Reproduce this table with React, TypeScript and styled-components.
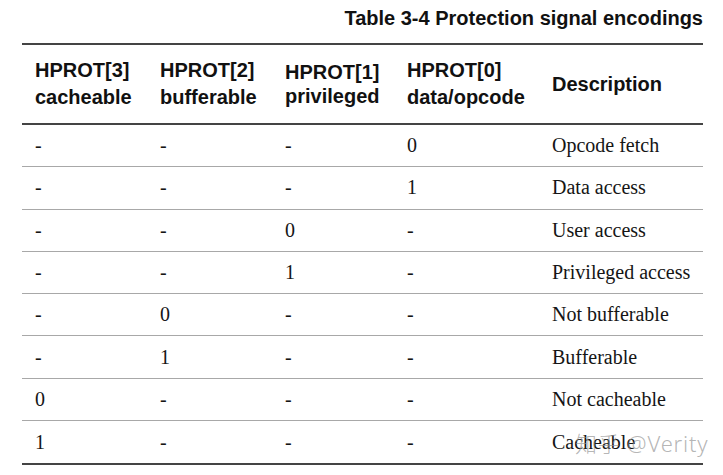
import styled, { createGlobalStyle } from 'styled-components';

const GlobalStyle = createGlobalStyle`
    html, body {
        margin: 0;
        padding: 0;
        background: #ffffff;
    }
`;

const Page = styled.div`
    width: 723px;
    height: 475px;
    padding: 6px 20px 0 22px;
    box-sizing: border-box;
    display: flex;
    flex-direction: column;
    position: relative;
    overflow: hidden;
`;

const Title = styled.div`
    font-family: 'Liberation Sans', Arial, sans-serif;
    font-weight: bold;
    font-size: 20px;
    line-height: 24px;
    color: #111;
    text-align: right;
    margin-bottom: 13px;
`;

const Table = styled.div`
    border-top: 2px solid #444;
    border-bottom: 2px solid #444;
    display: flex;
    flex-direction: column;
`;

const HeaderRow = styled.div`
    display: grid;
    grid-template-columns: 125px 125px 122px 145px 1fr;
    height: 78px;
    border-bottom: 2px solid #444;
`;

const HeadCell = styled.div<{ $tight?: boolean }>`
    display: flex;
    flex-direction: column;
    justify-content: center;
    padding-left: 13px;
    font-family: 'Liberation Sans', Arial, sans-serif;
    font-weight: bold;
    font-size: 20px;
    line-height: ${p => (p.$tight ? '24px' : '27px')};
    color: #111;
    white-space: nowrap;
`;

const Row = styled.div`
    display: grid;
    grid-template-columns: 125px 125px 122px 145px 1fr;
    height: 42.3px;
    box-sizing: border-box;
    border-bottom: 1px solid #a8a8a8;
    &:last-child {
        border-bottom: none;
    }
`;

const Cell = styled.div`
    display: flex;
    align-items: center;
    padding-left: 13px;
    font-family: 'Liberation Serif', 'Times New Roman', serif;
    font-size: 20px;
    color: #151515;
    white-space: nowrap;
    position: relative;
`;

// 知乎 watermark drawn over the last description cell
const Watermark = styled.div`
    position: absolute;
    left: 36px;
    top: 50%;
    transform: translateY(-50%);
    font-family: 'Noto Sans', 'Noto Sans CJK SC', sans-serif;
    font-size: 22px;
    font-weight: 300;
    color: rgba(150, 150, 150, 0.7);
    letter-spacing: 0.8px;
    pointer-events: none;
`;

const headers: { top: string; bottom: string; tight?: boolean }[] = [
    { top: 'HPROT[3]', bottom: 'cacheable' },
    { top: 'HPROT[2]', bottom: 'bufferable' },
    { top: 'HPROT[1]', bottom: 'privileged', tight: true },
    { top: 'HPROT[0]', bottom: 'data/opcode' },
];

const rows: string[][] = [
    ['-', '-', '-', '0', 'Opcode fetch'],
    ['-', '-', '-', '1', 'Data access'],
    ['-', '-', '0', '-', 'User access'],
    ['-', '-', '1', '-', 'Privileged access'],
    ['-', '0', '-', '-', 'Not bufferable'],
    ['-', '1', '-', '-', 'Bufferable'],
    ['0', '-', '-', '-', 'Not cacheable'],
    ['1', '-', '-', '-', 'Cacheable'],
];

const App = () => {
    return (
        <>
            <GlobalStyle />
            <Page>
                <Title>Table 3-4 Protection signal encodings</Title>
                <Table>
                    <HeaderRow>
                        {headers.map(h => (
                            <HeadCell key={h.top} $tight={h.tight}>
                                <span>{h.top}</span>
                                <span>{h.bottom}</span>
                            </HeadCell>
                        ))}
                        <HeadCell>Description</HeadCell>
                    </HeaderRow>
                    {rows.map((r, i) => (
                        <Row key={i}>
                            {r.map((v, j) => (
                                <Cell key={j}>
                                    {v}
                                    {i === rows.length - 1 && j === 4 && <Watermark>知乎 @Verity</Watermark>}
                                </Cell>
                            ))}
                        </Row>
                    ))}
                </Table>
            </Page>
        </>
    );
};

export default App;
